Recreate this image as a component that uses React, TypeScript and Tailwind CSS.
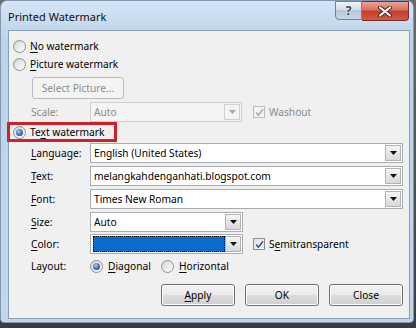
import type { ReactNode } from "react";

const U = ({ children }: { children: ReactNode }) => <span className="underline underline-offset-[2px]">{children}</span>;

const Radio = ({ on }: { on?: boolean }) => (
  <span className="flex h-[13px] w-[13px] shrink-0 items-center justify-center rounded-full border border-[#8f8f8f] bg-[linear-gradient(135deg,#d4d4d4,#ffffff)]">
    {on && <span className="h-[7px] w-[7px] rounded-full bg-[radial-gradient(circle_at_40%_35%,#a9ccf3,#1b58a5_70%)]" />}
  </span>
);

const Check = ({ dim }: { dim?: boolean }) => (
  <span
    className={`flex h-[12px] w-[12px] shrink-0 items-center justify-center border ${
      dim ? "border-[#bdbdbd] bg-[#f4f4f4]" : "border-[#8f8f8f] bg-[linear-gradient(135deg,#dedede,#ffffff)]"
    }`}
  >
    <svg width="9" height="9" viewBox="0 0 9 9">
      <path d="M1.2 4.6 L3.4 7.2 L8 1.2" stroke={dim ? "#a8a8a8" : "#2b5ca8"} strokeWidth="1.6" fill="none" />
    </svg>
  </span>
);

const Arrow = ({ dim }: { dim?: boolean }) => (
  <span
    className={`ml-auto mr-px flex h-[16px] w-[16px] shrink-0 items-center justify-center border ${
      dim ? "border-[#d0d0d0] bg-[#f4f4f4]" : "border-[#b3b3b3] bg-[linear-gradient(#f6f6f6,#d8d8d8)]"
    }`}
  >
    <svg width="7" height="4" viewBox="0 0 7 4">
      <path d="M0 0h7L3.5 4z" fill={dim ? "#a6a6a6" : "#111"} />
    </svg>
  </span>
);

const Combo = ({ w, text, dim }: { w: string; text: string; dim?: boolean }) => (
  <div className={`flex h-[20px] items-center border ${w} ${dim ? "border-[#cfcfcf] bg-[#f4f4f4] text-[#8a8a8a]" : "border-[#abadb3] bg-white text-black"}`}>
    <span className="pl-[3px]">{text}</span>
    <Arrow dim={dim} />
  </div>
);

const Label = ({ children, dim }: { children: ReactNode; dim?: boolean }) => (
  <span className={`w-[59px] shrink-0 ${dim ? "text-[#8a8a8a]" : ""}`}>{children}</span>
);

const Btn = ({ children }: { children: ReactNode }) => (
  <div className="flex h-[22px] w-[74px] items-center justify-center rounded-[3px] border border-[#707070] bg-[linear-gradient(#f3f3f3,#ebebeb_50%,#dddddd_50%,#cfcfcf)] shadow-[inset_0_0_0_1px_#fcfcfc]">
    {children}
  </div>
);

export default function App() {
  return (
    <div className="h-[328px] w-[416px] bg-[linear-gradient(#6a6a6a,#3c3c3c)] font-['Noto_Sans',sans-serif] text-[10.2px] leading-none text-black">
      <div className="h-[323px] w-[414px] rounded-t-[7px] rounded-b-[4px] border border-[#8297b0] bg-[linear-gradient(#d6e5f5,#bcd3ea_12%,#c3d7ec)]">
        {/* title bar */}
        <div className="flex h-[29px] items-start justify-between">
          <span className="pl-[7px] pt-[10px] text-[11px] text-[#111]">Printed Watermark</span>
          <div className="mr-[4px] flex">
            <div className="flex h-[19px] w-[27px] items-center justify-center rounded-bl-[4px] border border-[#6e8196] bg-[linear-gradient(#eef3f8,#cfdbe8_50%,#b9c9da_50%,#c8d6e4)] text-[12px] font-bold text-[#3b4654] [text-shadow:0_0_2px_#fff]">
              ?
            </div>
            <div className="flex h-[20px] w-[47px] items-center justify-center rounded-br-[4px] border border-l-0 border-[#7a2c24] bg-[linear-gradient(#eaa496,#d7705f_45%,#c53f2c_50%,#d05a44)]">
              <svg width="14" height="11" viewBox="0 0 14 11">
                <path d="M2 1.5 L12 9.5 M12 1.5 L2 9.5" stroke="#5a1c15" strokeWidth="4" strokeLinecap="round" />
                <path d="M2 1.5 L12 9.5 M12 1.5 L2 9.5" stroke="#fff" strokeWidth="2.2" strokeLinecap="round" />
              </svg>
            </div>
          </div>
        </div>

        {/* client area */}
        <div className="ml-[7px] flex h-[289px] w-[402px] flex-col border border-[#8a9db4] bg-[#f0f0f0] pt-[6px]">
          <div className="flex h-[18px] items-center gap-[4px] pl-[4px]">
            <Radio />
            <span>
              <U>N</U>o watermark
            </span>
          </div>
          <div className="flex h-[19px] items-center gap-[4px] pl-[4px]">
            <Radio />
            <span>
              <U>P</U>icture watermark
            </span>
          </div>
          <div className="ml-[23px] mt-[3px] flex h-[22px] w-[92px] items-center justify-center rounded-[3px] border border-[#b8bcbf] bg-[#f4f4f4] text-[#8d8d8d]">
            Select Picture...
          </div>
          <div className="mt-[3px] flex h-[20px] items-center pl-[22px]">
            <Label dim>Scale:</Label>
            <Combo w="w-[152px]" text="Auto" dim />
            <span className="ml-[11px] flex items-center gap-[4px] text-[#8a8a8a]">
              <Check dim />
              Washout
            </span>
          </div>
          <div className="-ml-[2px] flex h-[20px] w-[110px] items-center gap-[4px] border-[3px] border-[#d0202b] pl-[3px]">
            <Radio on />
            <span>
              Te<U>x</U>t watermark
            </span>
          </div>
          <div className="mt-[1px] flex h-[20px] items-center pl-[22px]">
            <Label>
              <U>L</U>anguage:
            </Label>
            <Combo w="w-[313px]" text="English (United States)" />
          </div>
          <div className="mt-[3px] flex h-[20px] items-center pl-[22px]">
            <Label>
              <U>T</U>ext:
            </Label>
            <Combo w="w-[313px]" text="melangkahdenganhati.blogspot.com" />
          </div>
          <div className="mt-[3px] flex h-[20px] items-center pl-[22px]">
            <Label>
              <U>F</U>ont:
            </Label>
            <Combo w="w-[313px]" text="Times New Roman" />
          </div>
          <div className="mt-[3px] flex h-[20px] items-center pl-[22px]">
            <Label>
              <U>S</U>ize:
            </Label>
            <Combo w="w-[153px]" text="Auto" />
          </div>
          <div className="mt-[2px] flex h-[20px] items-center pl-[22px]">
            <Label>
              <U>C</U>olor:
            </Label>
            <div className="flex h-[20px] w-[153px] items-center border border-[#abadb3] bg-white">
              <span className="ml-[2px] h-[16px] w-[132px] border border-dotted border-black bg-[#0a6ccc]" />
              <Arrow />
            </div>
            <span className="ml-[10px] flex items-center gap-[4px]">
              <Check />
              <span>
                S<U>e</U>mitransparent
              </span>
            </span>
          </div>
          <div className="mt-[3px] flex h-[18px] items-center pl-[22px]">
            <Label>Layout:</Label>
            <span className="flex w-[71px] items-center gap-[5px]">
              <Radio on />
              <span>
                <U>D</U>iagonal
              </span>
            </span>
            <span className="flex items-center gap-[5px]">
              <Radio />
              <span>
                <U>H</U>orizontal
              </span>
            </span>
          </div>
          <div className="mt-[9px] flex justify-end gap-[10px] pr-[6px]">
            <Btn>
              <U>A</U>pply
            </Btn>
            <Btn>OK</Btn>
            <Btn>Close</Btn>
          </div>
        </div>
      </div>
    </div>
  );
}
